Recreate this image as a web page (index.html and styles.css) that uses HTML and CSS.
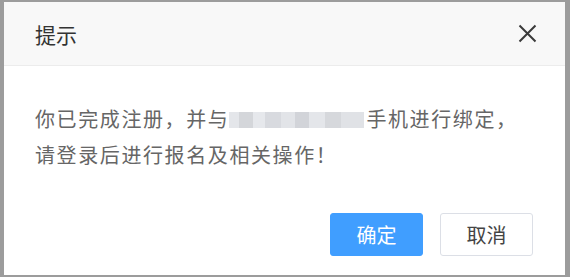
FILE: index.html
```html
<!DOCTYPE html>
<html lang="zh-CN">
<head>
<meta charset="utf-8">
<link rel="stylesheet" href="styles.css">
</head>
<body>
<div class="overlay">
  <div class="dialog">
    <div class="dialog-header">
      <span class="dialog-title">提示</span>
      <svg class="close" width="19" height="19" viewBox="0 0 19 19"><path d="M1.5 1.5 L17.5 17.5 M17.5 1.5 L1.5 17.5" stroke="#3a3a3a" stroke-width="2" fill="none"/></svg>
    </div>
    <div class="dialog-body">
      <p class="msg">你已完成注册，并与<span class="blur"></span>手机进行绑定，</p>
      <p class="msg">请登录后进行报名及相关操作！</p>
    </div>
    <div class="dialog-footer">
      <button class="btn btn-primary">确定</button>
      <button class="btn btn-default">取消</button>
    </div>
  </div>
</div>
</body>
</html>
```
FILE: styles.css
```css
html, body {
  margin: 0;
  padding: 0;
  width: 570px;
  height: 277px;
  overflow: hidden;
  background: #9c9c9c;
  font-family: "Noto Sans CJK SC", "Noto Sans", sans-serif;
}
.overlay {
  box-sizing: border-box;
  width: 570px;
  height: 277px;
  padding: 2px 5px 2px 4px;
  display: flex;
}
.dialog {
  flex: 1;
  background: #fff;
  display: flex;
  flex-direction: column;
}
.dialog-header {
  box-sizing: border-box;
  height: 64px;
  background: #f8f8f8;
  border-bottom: 1px solid #ececec;
  display: flex;
  align-items: center;
  justify-content: space-between;
  padding: 0 28px 0 31px;
}
.dialog-title {
  font-size: 21px;
  color: #333;
}
.close {
  display: block;
}
.dialog-body {
  padding: 35px 20px 0 31px;
  flex: 1;
}
.msg {
  margin: 0;
  font-size: 20px;
  letter-spacing: 1.6px;
  line-height: 36px;
  color: #666;
  white-space: nowrap;
}
.blur {
  display: inline-block;
  width: 135px;
  height: 16px;
  margin-right: 2px;
  vertical-align: -1px;
  background:
    linear-gradient(90deg, #e4e6ea 0 10px, #d4d6da 10px 24px, #e6e8ec 24px 36px, #d8dadf 36px 52px, #e2e4e8 52px 66px, #d2d4d9 66px 80px, #e4e6ea 80px 96px, #d6d8dc 96px 112px, #e0e2e6 112px 135px);
}
.dialog-footer {
  display: flex;
  justify-content: flex-end;
  gap: 17px;
  padding: 0 32px 19px 0;
}
.btn {
  box-sizing: border-box;
  width: 93px;
  height: 43px;
  font-family: inherit;
  font-size: 20px;
  border-radius: 3px;
  padding: 0;
}
.btn-primary {
  background: #409eff;
  border: 1px solid #409eff;
  color: #fff;
}
.btn-default {
  background: #fff;
  border: 1px solid #dcdfe6;
  color: #444;
}
```
